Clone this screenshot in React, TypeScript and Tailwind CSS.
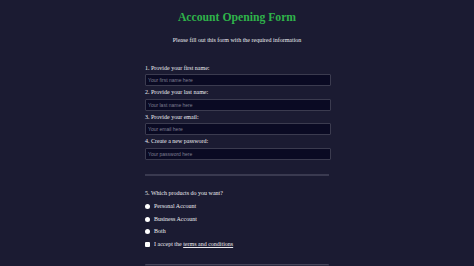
const fields = [
  { label: "1. Provide your first name:", placeholder: "Your first name here", type: "text" },
  { label: "2. Provide your last name:", placeholder: "Your last name here", type: "text" },
  { label: "3. Provide your email:", placeholder: "Your email here", type: "email" },
  { label: "4. Create a new password:", placeholder: "Your password here", type: "password" },
];

const products = ["Personal Account", "Business Account", "Both"];

export default function App() {
  return (
    <div className="min-h-screen overflow-hidden bg-[#1b1b32] font-['Liberation_Serif',serif] text-[#ebebef]">
      <h1 className="pt-[11px] text-center text-[11.7px] font-bold leading-[14px] text-[#2fb34a]">
        Account Opening Form
      </h1>
      <p className="mt-[11.5px] text-center text-[6px] leading-[7px]">
        Please fill out this form with the required information
      </p>

      <form className="ml-[145px] mt-[21px] w-[186px]">
        {fields.map((field) => (
          <label key={field.label} className="mb-[3px] block">
            <span className="block text-[6px] leading-[7px]">{field.label}</span>
            <input
              type={field.type}
              placeholder={field.placeholder}
              className="mt-[2.5px] block h-[12px] w-full rounded-[1px] border border-[#3b3b4f] bg-[#0a0a23] px-[2px] font-['Liberation_Sans',sans-serif] text-[5px] text-[#f5f6f7] outline-none placeholder:text-[#7f7f92]"
            />
          </label>
        ))}

        <div className="mt-[14px] h-[2px] w-[184px] bg-[#3a3a50]" />

        <p className="mt-[14px] text-[6px] leading-[7px]">5. Which products do you want?</p>
        <div className="mt-[4px]">
          {products.map((product) => (
            <label key={product} className="flex h-[12.5px] items-center gap-[4px] text-[6px]">
              <span className="h-[5px] w-[5px] rounded-full bg-white" />
              {product}
            </label>
          ))}
          <label className="flex h-[12.5px] items-center gap-[4px] text-[6px]">
            <span className="h-[5px] w-[5px] rounded-[1px] bg-white" />
            <span>
              I accept the <span className="underline">terms and conditions</span>
            </span>
          </label>
        </div>

        <div className="mt-[13px] h-[12px] w-[184px] rounded-t-[1px] border-t border-[#45455a] bg-[#2a2a40]" />
      </form>
    </div>
  );
}
